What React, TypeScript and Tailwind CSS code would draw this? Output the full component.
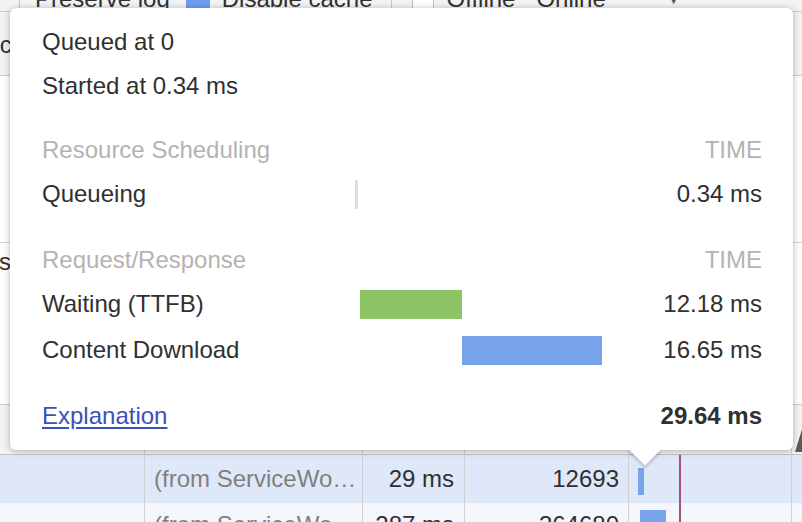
const rows = [
  { name: '(from ServiceWo…', time: '29 ms', size: '12693', barLeft: 9, barWidth: 6, barTop: 13, barHeight: 27 },
  { name: '(from ServiceWo…', time: '287 ms', size: '364680', barLeft: 11, barWidth: 26, barTop: 7, barHeight: 34 },
];

function Timing({ label, bar, time, className = '' }: { label: string; bar?: { left: number; width: number; color: string }; time: string; className?: string }) {
  return (
    <div className={`flex items-center h-[44px] ${className}`}>
      <div className="w-[313px] shrink-0">{label}</div>
      <div className="relative w-[247px] h-[29px] shrink-0">
        {bar && (
          <div
            className="absolute top-0 h-[29px]"
            style={{ left: bar.left, width: bar.width, background: bar.color }}
          />
        )}
      </div>
      <div className="flex-1 text-right">{time}</div>
    </div>
  );
}

export default function App() {
  return (
    <div className="relative w-[802px] h-[522px] overflow-hidden bg-white text-[#303030] text-[24px] leading-[28px] font-['Liberation_Sans',Arial,sans-serif]">
      {/* toolbar, only its bottom edge shows */}
      <div className="h-[12px] overflow-hidden bg-[#f3f3f3] border-b border-[#cdcdcd]">
        <div className="flex items-center h-[28px] -mt-[15px] whitespace-nowrap">
          <div className="w-[20px] h-[28px] border-r border-[#c8c8c8] shrink-0" />
          <span className="ml-[15px]">Preserve log</span>
          <span className="ml-[16px] w-[24px] h-[24px] rounded-[3px] bg-[#6f9cf0] shrink-0" />
          <span className="ml-[12px]">Disable cache</span>
          <div className="ml-[19px] w-[1px] h-[28px] bg-[#c8c8c8] shrink-0" />
          <span className="ml-[20px] w-[22px] h-[24px] rounded-[3px] border border-[#bdbdbd] bg-white shrink-0" />
          <span className="ml-[12px]">Offline</span>
          <span className="ml-[21px]">Online</span>
          <span className="ml-[60px] text-[16px] text-[#555]">▼</span>
        </div>
      </div>

      {/* filter bar */}
      <div className="h-[64px] bg-[#f3f3f3] border-b border-[#cdcdcd] flex items-center overflow-hidden whitespace-nowrap">
        <span className="-ml-[31px] mt-[3px]">Docs</span>
      </div>

      {/* overview */}
      <div className="h-[167px] border-b border-[#d6d6d6]" />

      {/* timeline */}
      <div className="h-[162px] border-b border-[#cdcdcd] pt-[5px] whitespace-nowrap overflow-hidden">
        <span className="-ml-[21px]">ms</span>
      </div>

      {/* table header */}
      <div className="h-[50px] bg-[#f3f3f3] border-b border-[#c4c4c4] grid grid-cols-[145px_218px_102px_164px_163px_1fr]">
        <div className="border-r border-[#d0d0d0]" />
        <div className="border-r border-[#d0d0d0]" />
        <div className="border-r border-[#d0d0d0]" />
        <div className="border-r border-[#d0d0d0]" />
        <div className="border-r border-[#d0d0d0]" />
        <div className="relative">
          <svg width="20" height="30" viewBox="0 0 20 30" className="absolute left-[2px] top-[20px]">
            <polygon points="1,27 17,27 9,1" fill="#5a5a5a" />
          </svg>
        </div>
      </div>

      {/* rows */}
      {rows.map((r, i) => (
        <div
          key={i}
          className={`h-[48px] grid grid-cols-[145px_218px_102px_164px_163px_1fr] items-stretch whitespace-nowrap ${i === 0 ? 'bg-[#dfe8f9]' : 'bg-[#f3f6fc] pb-[5px]'}`}
        >
          <div className="border-r border-[#d0d0d0]" />
          <div className="border-r border-[#d0d0d0] flex items-center pl-[9px] text-[#7f7f7f]">{r.name}</div>
          <div className="border-r border-[#d0d0d0] flex items-center justify-end pr-[10px]">{r.time}</div>
          <div className="border-r border-[#d0d0d0] flex items-center justify-end pr-[9px]">{r.size}</div>
          <div className="border-r border-[#d0d0d0] relative">
            <div
              className="absolute bg-[#76a3ea]"
              style={{ left: r.barLeft, width: r.barWidth, top: r.barTop, height: r.barHeight }}
            />
          </div>
          <div />
        </div>
      ))}

      {/* DOMContentLoaded marker */}
      <div className="absolute left-[679px] top-[455px] w-[2px] h-[67px] bg-[#a1527a]" />

      {/* timing popover */}
      <div className="absolute left-[10px] top-[8px] w-[783px] h-[442px] bg-white rounded-[6px] shadow-[0_1px_7px_rgba(0,0,0,0.3)] pl-[32px] pr-[31px] pt-[12px]">
        <div className="h-[44px] flex items-center">Queued at 0</div>
        <div className="h-[44px] flex items-center">Started at 0.34 ms</div>

        <div className="mt-[20px] h-[44px] flex items-center justify-between text-[#b3b3b3]">
          <span>Resource Scheduling</span>
          <span>TIME</span>
        </div>
        <Timing label="Queueing" bar={{ left: 0, width: 3, color: '#dedede' }} time="0.34 ms" />

        <div className="mt-[22px] h-[44px] flex items-center justify-between text-[#b3b3b3]">
          <span>Request/Response</span>
          <span>TIME</span>
        </div>
        <Timing label="Waiting (TTFB)" bar={{ left: 5, width: 102, color: '#8dc465' }} time="12.18 ms" />
        <Timing label="Content Download" bar={{ left: 107, width: 140, color: '#76a3ea' }} time="16.65 ms" className="mt-[2px]" />

        <div className="mt-[22px] h-[44px] flex items-center justify-between">
          <a href="#" className="text-[#3c50b9] underline underline-offset-[3px]">Explanation</a>
          <span className="font-bold">29.64 ms</span>
        </div>
      </div>

      {/* popover arrow */}
      <div className="absolute left-[634px] top-[439px] w-[22px] h-[22px] rotate-45 bg-white shadow-[2px_2px_3px_rgba(0,0,0,0.18)]" />
    </div>
  );
}
